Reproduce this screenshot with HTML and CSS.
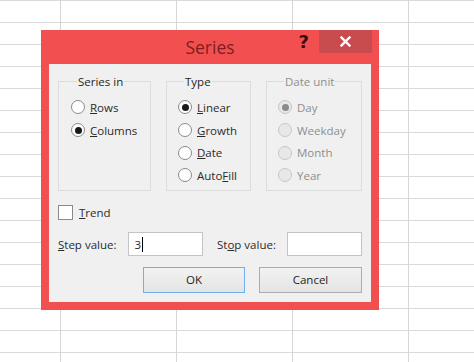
FILE: index.html
```html
<!DOCTYPE html>
<html lang="en">
<head>
<meta charset="utf-8">
<title>Series</title>
<link rel="stylesheet" href="styles.css">
</head>
<body>
<div class="sheet">
  <div class="dialog">
    <div class="titlebar">
      <div></div>
      <div class="title">Series</div>
      <div class="controls">
        <span class="help">?</span>
        <span class="close"><svg width="11" height="11" viewBox="0 0 11 11"><path d="M1.5 1.5 L9.5 9.5 M9.5 1.5 L1.5 9.5" stroke="#ffffff" stroke-width="2.4" stroke-linecap="square"/></svg></span>
      </div>
    </div>
    <div class="client">
      <div class="groups">
        <fieldset class="group g-series">
          <legend>Series in</legend>
          <div class="opt"><span class="radio"></span><span><u>R</u>ows</span></div>
          <div class="opt"><span class="radio on"></span><span><u>C</u>olumns</span></div>
        </fieldset>
        <fieldset class="group g-type">
          <legend>Type</legend>
          <div class="opt"><span class="radio on"></span><span><u>L</u>inear</span></div>
          <div class="opt"><span class="radio"></span><span><u>G</u>rowth</span></div>
          <div class="opt"><span class="radio"></span><span><u>D</u>ate</span></div>
          <div class="opt"><span class="radio"></span><span>Auto<u>F</u>ill</span></div>
        </fieldset>
        <fieldset class="group g-date disabled">
          <legend>Date unit</legend>
          <div class="opt"><span class="radio on"></span><span>Day</span></div>
          <div class="opt"><span class="radio"></span><span>Weekday</span></div>
          <div class="opt"><span class="radio"></span><span>Month</span></div>
          <div class="opt"><span class="radio"></span><span>Year</span></div>
        </fieldset>
      </div>
      <div class="trend"><span class="check"></span><span><u>T</u>rend</span></div>
      <div class="values">
        <span class="lbl-step"><u>S</u>tep value:</span>
        <span class="input"><span>3</span><span class="caret"></span></span>
        <span class="lbl-stop">St<u>o</u>p value:</span>
        <span class="input"></span>
      </div>
      <div class="buttons">
        <span class="btn ok">OK</span>
        <span class="btn cancel">Cancel</span>
      </div>
    </div>
  </div>
</div>
</body>
</html>
```
FILE: styles.css
```css
html, body {
  margin: 0;
  padding: 0;
  width: 474px;
  height: 362px;
  overflow: hidden;
}
body {
  background-color: #ffffff;
  background-image:
    linear-gradient(to right, transparent 115px, #d6d6d6 115px, #d6d6d6 116px),
    linear-gradient(to bottom, transparent 21px, #dadada 21px, #dadada 22px);
  background-size: 116px 100%, 100% 22px;
  background-position: 61px 0, 0 1px;
  font-family: "Open Sans", "Noto Sans", "Liberation Sans", sans-serif;
  font-size: 11.5px;
  color: #2b2b2b;
}
.sheet {
  padding: 30px 0 0 41px;
}
.dialog {
  width: 322px;
  background: #f25050;
  padding: 0 8px 8px 8px;
}
.titlebar {
  height: 34px;
  display: grid;
  grid-template-columns: 1fr auto 1fr;
  align-items: start;
}
.title {
  font-size: 17.5px;
  color: #7e1e1e;
  line-height: 34px;
}
.controls {
  display: flex;
  justify-content: flex-end;
  align-items: flex-start;
  margin-right: -1px;
}
.help {
  font-family: "DejaVu Sans", sans-serif;
  font-weight: bold;
  font-size: 18px;
  color: #3d0b0b;
  line-height: 24px;
  margin-right: 10px;
}
.close {
  width: 53px;
  height: 23px;
  background: #c84b4d;
  display: flex;
  align-items: center;
  justify-content: center;
}
.client {
  background: #f0f0f0;
  height: 238px;
  padding: 0 9px;
  box-sizing: border-box;
}
.groups {
  display: flex;
  gap: 15px;
  padding-top: 10px;
}
.group {
  margin: 0;
  border: 1px solid #dcdcdc;
  height: 117px;
  box-sizing: border-box;
  padding: 7px 0 0 12px;
  min-width: 0;
}
.group legend {
  padding: 0 1px;
  margin-left: 6px;
  color: #262626;
}
.g-series { width: 93px; padding-left: 12px; }
.g-type { width: 85px; padding-left: 11px; }
.g-date { width: 96px; padding-left: 11px; }
.disabled legend, .disabled .opt { color: #8e8e8e; }
.opt {
  display: flex;
  align-items: center;
  gap: 5px;
  height: 22.7px;
}
.radio {
  width: 12px;
  height: 12px;
  border: 1px solid #8a8a8a;
  border-radius: 50%;
  background: #ffffff;
  display: flex;
  align-items: center;
  justify-content: center;
  flex: none;
}
.radio.on::after {
  content: "";
  width: 7px;
  height: 7px;
  border-radius: 50%;
  background: #1a1a1a;
}
.disabled .radio {
  background: #e8e8e8;
  border-color: #c6c6c6;
}
.disabled .radio.on::after {
  background: #8a8a8a;
}
.trend {
  display: flex;
  align-items: center;
  gap: 6px;
  margin-top: 14px;
  height: 15px;
}
.check {
  width: 13px;
  height: 13px;
  border: 1px solid #8a8a8a;
  background: #ffffff;
}
.values {
  display: flex;
  align-items: center;
  margin-top: 12px;
  height: 24px;
}
.lbl-step { width: 71px; }
.lbl-stop { margin-left: 14px; width: 71px; }
.input {
  height: 22px;
  border: 1px solid #c4c4c4;
  background: #ffffff;
  display: flex;
  align-items: center;
  padding-left: 5px;
  box-sizing: content-box;
  width: 68px;
}
.caret {
  width: 1px;
  height: 15px;
  background: #000;
  margin-left: 1px;
}
.buttons {
  display: flex;
  justify-content: flex-end;
  gap: 14px;
  margin-top: 11px;
}
.btn {
  height: 24px;
  line-height: 24px;
  text-align: center;
  background: linear-gradient(#f2f2f2, #e4e4e4);
  border: 1px solid #acacac;
  color: #1e1e1e;
}
.ok {
  width: 100px;
  border-color: #6fb0ec;
}
.cancel {
  width: 101px;
}
```
